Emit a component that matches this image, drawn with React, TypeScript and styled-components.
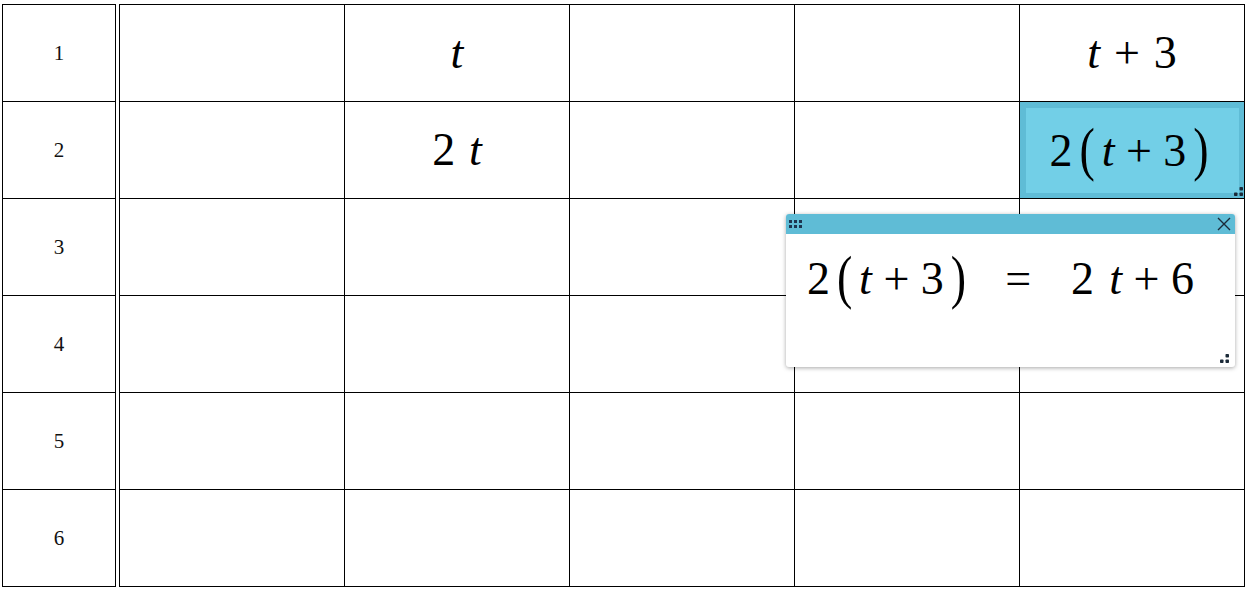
import React from "react";
import styled, { createGlobalStyle } from "styled-components";

const GlobalStyle = createGlobalStyle`
  html, body { margin: 0; padding: 0; background: #ffffff; }
  body { font-family: "Liberation Serif", "Times New Roman", serif; color: #000; }
`;

const Page = styled.div`
  position: relative;
  display: flex;
  align-items: flex-start;
  gap: 3px;
  padding: 4px 0 0 2px;
  width: 1249px;
  height: 592px;
  box-sizing: border-box;
  overflow: hidden;
`;

const Grid = styled.div<{ $cols: number; $colW: number }>`
  display: grid;
  grid-template-columns: repeat(${(p) => p.$cols}, ${(p) => p.$colW}px);
  grid-auto-rows: 97px;
  border-left: 1px solid #000;
  border-top: 1px solid #000;
`;

const Cell = styled.div`
  position: relative;
  box-sizing: border-box;
  border-right: 1px solid #000;
  border-bottom: 1px solid #000;
  display: flex;
  align-items: center;
  justify-content: center;
`;

const RowLabel = styled.span`
  font-family: "Liberation Serif", serif;
  font-size: 21px;
  color: #111;
`;

const SelectedBox = styled.div`
  position: absolute;
  inset: 0;
  box-sizing: border-box;
  background: #72cfe7;
  border: 6px solid #5fbcd6;
  border-right-width: 5px;
  border-bottom-width: 5px;
  display: flex;
  align-items: center;
  justify-content: center;
`;

const MathLine = styled.span`
  display: inline-flex;
  align-items: baseline;
  font-family: "Liberation Serif", serif;
  font-size: 46px;
  line-height: 1;
  white-space: nowrap;
`;

const Num = styled.span``;

const Var = styled.span`
  font-style: italic;
`;

const Op = styled.span<{ $l?: number; $r?: number }>`
  margin: 0 ${(p) => p.$r ?? p.$l ?? 0.25}em 0 ${(p) => p.$l ?? 0.25}em;
`;

const Paren = styled.span`
  display: inline-block;
  transform: scale(1, 1.3);
  transform-origin: 50% 62%;
  margin: 0 0.15em;
`;

const Space = styled.span<{ $w: number }>`
  display: inline-block;
  width: ${(p) => p.$w}em;
`;

const Handle = styled.svg<{ $r: number; $b: number }>`
  position: absolute;
  right: ${(p) => p.$r}px;
  bottom: ${(p) => p.$b}px;
  width: 9px;
  height: 9px;
`;

const Popup = styled.div`
  position: absolute;
  left: 786px;
  top: 214px;
  width: 449px;
  height: 153px;
  background: #ffffff;
  border-radius: 3px;
  box-shadow: 0 1px 4px rgba(0, 0, 0, 0.35);
  display: flex;
  flex-direction: column;
  overflow: hidden;
`;

const PopupBar = styled.div`
  height: 20px;
  background: #5fbcd6;
  display: flex;
  align-items: center;
  justify-content: space-between;
  padding: 0 3px 0 3px;
  flex-shrink: 0;
`;

const PopupBody = styled.div`
  position: relative;
  flex: 1;
  padding: 22px 0 0 21px;
`;

const ResizeDots = ({ r, b }: { r: number; b: number }) => (
  <Handle $r={r} $b={b} viewBox="0 0 9 9">
    <rect x="5.5" y="0" width="3.5" height="3.5" rx="0.8" fill="#1b2a38" />
    <rect x="0" y="5.5" width="3.5" height="3.5" rx="0.8" fill="#1b2a38" />
    <rect x="5.5" y="5.5" width="3.5" height="3.5" rx="0.8" fill="#1b2a38" />
  </Handle>
);

const GripIcon = () => (
  <svg width="14" height="8" viewBox="0 0 14 8">
    {[0, 5, 10].map((x) =>
      [0, 5].map((y) => (
        <rect key={`${x}-${y}`} x={x} y={y} width="3" height="3" fill="#1d3550" />
      ))
    )}
  </svg>
);

const CloseIcon = () => (
  <svg width="16" height="16" viewBox="0 0 16 16">
    <path d="M2 2 L14 14 M14 2 L2 14" stroke="#1a2a38" strokeWidth="1.4" fill="none" />
  </svg>
);

const T = () => <Var>t</Var>;

const TwoTPlusThree = () => (
  <>
    <Num>2</Num>
    <Paren>(</Paren>
    <T />
    <Op>+</Op>
    <Num>3</Num>
    <Paren>)</Paren>
  </>
);

const cellContent: Record<string, React.ReactNode> = {
  "0-1": (
    <MathLine>
      <T />
    </MathLine>
  ),
  "0-4": (
    <MathLine>
      <T />
      <Op $l={0.3}>+</Op>
      <Num>3</Num>
    </MathLine>
  ),
  "1-1": (
    <MathLine>
      <Num>2</Num>
      <Space $w={0.3} />
      <T />
    </MathLine>
  ),
};

export default function App() {
  const rows = [1, 2, 3, 4, 5, 6];
  return (
    <>
      <GlobalStyle />
      <Page>
        <Grid $cols={1} $colW={113}>
          {rows.map((r) => (
            <Cell key={r}>
              <RowLabel>{r}</RowLabel>
            </Cell>
          ))}
        </Grid>
        <Grid $cols={5} $colW={225}>
          {rows.map((_, ri) =>
            [0, 1, 2, 3, 4].map((ci) => {
              const key = `${ri}-${ci}`;
              if (ri === 1 && ci === 4) {
                return (
                  <Cell key={key}>
                    <SelectedBox>
                      <MathLine>
                        <TwoTPlusThree />
                      </MathLine>
                    </SelectedBox>
                    <ResizeDots r={1} b={2} />
                  </Cell>
                );
              }
              return <Cell key={key}>{cellContent[key]}</Cell>;
            })
          )}
        </Grid>
        <Popup>
          <PopupBar>
            <GripIcon />
            <CloseIcon />
          </PopupBar>
          <PopupBody>
            <MathLine>
              <TwoTPlusThree />
              <Op $l={0.7} $r={0.87}>=</Op>
              <Num>2</Num>
              <Space $w={0.33} />
              <T />
              <Op>+</Op>
              <Num>6</Num>
            </MathLine>
            <ResizeDots r={6} b={4} />
          </PopupBody>
        </Popup>
      </Page>
    </>
  );
}
